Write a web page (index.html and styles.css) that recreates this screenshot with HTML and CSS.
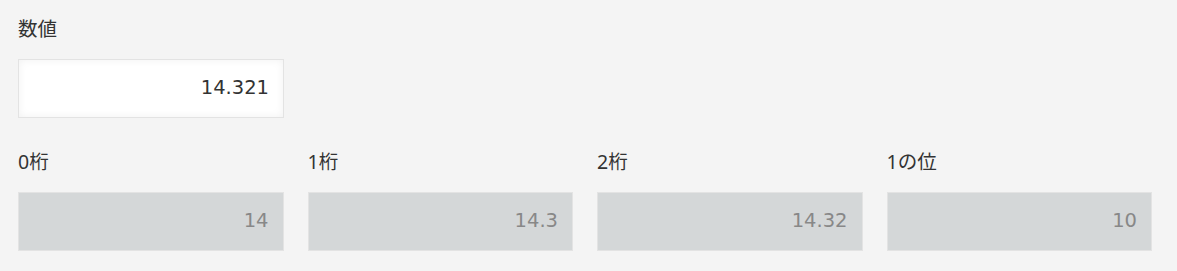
FILE: index.html
```html
<!DOCTYPE html>
<html lang="ja">
<head>
<meta charset="utf-8">
<link rel="stylesheet" href="styles.css">
</head>
<body>
<div class="page">
  <div class="field first">
    <div class="label">数値</div>
    <div class="box input">14.321</div>
  </div>
  <div class="row">
    <div class="field">
      <div class="label">0桁</div>
      <div class="box readonly">14</div>
    </div>
    <div class="field">
      <div class="label">1桁</div>
      <div class="box readonly">14.3</div>
    </div>
    <div class="field">
      <div class="label">2桁</div>
      <div class="box readonly">14.32</div>
    </div>
    <div class="field">
      <div class="label">1の位</div>
      <div class="box readonly">10</div>
    </div>
  </div>
</div>
</body>
</html>
```
FILE: styles.css
```css
html, body {
  margin: 0;
  background: #f4f4f4;
}
body {
  font-family: "Noto Sans", "Noto Sans CJK JP", sans-serif;
  color: #333;
}
.page {
  padding: 14px 25px 0 18px;
  width: 1134px;
}
.row {
  display: grid;
  grid-template-columns: repeat(4, 1fr);
  column-gap: 24px;
  margin-top: 29px;
}
.first {
  width: 266px;
}
.label {
  font-size: 19.5px;
  line-height: 30px;
  height: 30px;
  margin-bottom: 15px;
}
.box {
  box-sizing: border-box;
  height: 59px;
  border: 1px solid #e3e3e3;
  font-family: "DejaVu Sans", "Noto Sans CJK JP", sans-serif;
  font-size: 19.5px;
  display: flex;
  align-items: center;
  justify-content: flex-end;
  padding-right: 14px;
  padding-bottom: 2px;
}
.input {
  background: #fff;
  color: #333;
  box-shadow: inset 0 0 8px rgba(0,0,0,0.06);
}
.readonly {
  background: #d4d7d8;
  color: #888;
}
```
